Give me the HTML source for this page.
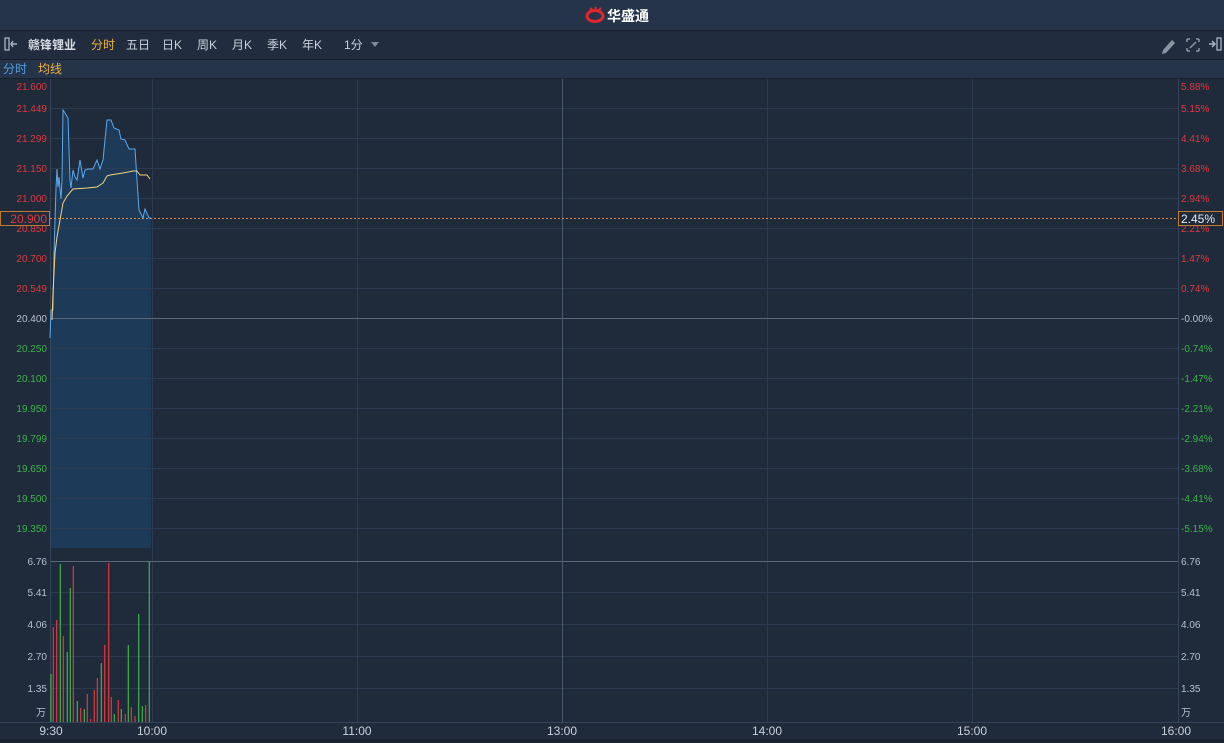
<!DOCTYPE html>
<html><head><meta charset="utf-8"><style>
html,body{margin:0;padding:0;width:1224px;height:743px;overflow:hidden;background:#1f2a3a;font-family:"Liberation Sans","Noto Sans CJK SC",sans-serif}
svg{display:block}
</style></head><body>
<svg width="1224" height="743" xmlns="http://www.w3.org/2000/svg" font-family="Liberation Sans, Noto Sans CJK SC, sans-serif">
<rect x="0" y="0" width="1224" height="743" fill="#1f2a3a"/>
<rect x="0" y="0" width="1224" height="30" fill="#253449"/>
<rect x="0" y="30" width="1224" height="1" fill="#17202c"/>
<rect x="0" y="31" width="1224" height="28" fill="#212d3e"/>
<rect x="0" y="59" width="1224" height="1" fill="#17202c"/>
<rect x="0" y="60" width="1224" height="18" fill="#253449"/>
<rect x="0" y="78" width="1224" height="1" fill="#17202c"/>
<rect x="0" y="739" width="1224" height="4" fill="#1a2330"/>
<!-- logo -->
<g transform="translate(586,8)">
<ellipse cx="9" cy="8" rx="8" ry="5.5" fill="none" stroke="#e0262e" stroke-width="3"/>
<path d="M4 2 L6 0 M9 1 L10 -1 M13 2 L15 0" stroke="#e0262e" stroke-width="2"/>
</g>
<text x="607" y="21" fill="#ffffff" font-size="14" font-weight="bold">华盛通</text>
<!-- toolbar -->
<rect x="5" y="38" width="4" height="12" fill="none" stroke="#aab4c2" stroke-width="1.3"/>
<path d="M11 44 H17 M13 41 L11 44 L13 47" stroke="#aab4c2" stroke-width="1.5" fill="none"/>
<text x="28" y="49" fill="#d6dbe3" font-size="12" font-weight="bold">赣锋锂业</text>
<text x="91" y="49" fill="#f0b23c" font-size="12">分时</text>
<text x="126" y="49" fill="#c9d1dc" font-size="12">五日</text>
<text x="162" y="49" fill="#c9d1dc" font-size="12">日K</text>
<text x="197" y="49" fill="#c9d1dc" font-size="12">周K</text>
<text x="232" y="49" fill="#c9d1dc" font-size="12">月K</text>
<text x="267" y="49" fill="#c9d1dc" font-size="12">季K</text>
<text x="302" y="49" fill="#c9d1dc" font-size="12">年K</text>
<text x="344" y="49" fill="#c9d1dc" font-size="12">1分</text>
<path d="M371 42 L379 42 L375 47 Z" fill="#7f8a99"/>
<path d="M1163 50 L1172 40 L1175 43 L1166 53 L1162 54 Z" fill="#8a94a3"/>
<path d="M1187 39 h3 M1187 39 v3 M1199 39 h-3 M1199 39 v3 M1187 51 h3 M1187 51 v-3 M1199 51 h-3 M1199 51 v-3 M1190 48 L1196 42" stroke="#8a94a3" stroke-width="1.5" fill="none"/>
<path d="M1209 44 H1214 M1212 41 L1215 44 L1212 47" stroke="#aab4c2" stroke-width="1.5" fill="none"/>
<rect x="1217" y="38" width="4" height="12" fill="none" stroke="#aab4c2" stroke-width="1.3"/>
<text x="3" y="73" fill="#4f9ee6" font-size="12">分时</text>
<text x="38" y="73" fill="#f0b23c" font-size="12">均线</text>
<!-- area -->
<path d="M50 338 L51 310 L53 310 L54 253 L56 188 L57 169 L58 187 L59 177 L61 199 L62 180 L63 110 L65 113 L68 118 L70 180 L71 188 L73 170 L75 177 L77 180 L80 160 L83 178 L85 170 L88 169 L93 169 L97 160 L100 169 L103 160 L107 120 L111 120 L114 128 L119 130 L121 139 L125 140 L129 149 L135 149 L137 180 L139 210 L143 218 L145 209 L149 218 L151 218 L151 548 L50 548 Z" fill="#1d3a58"/>
<!-- grid -->
<g stroke="#2c3b50" stroke-width="1">
<path d="M50 108.5H1178 M50 138.5H1178 M50 168.5H1178 M50 198.5H1178 M50 228.5H1178 M50 258.5H1178 M50 288.5H1178 M50 348.5H1178 M50 378.5H1178 M50 408.5H1178 M50 438.5H1178 M50 468.5H1178 M50 498.5H1178 M50 528.5H1178"/>
<path d="M50 592.5H1178 M50 624.5H1178 M50 656.5H1178 M50 688.5H1178"/>
<path d="M152.5 79V722 M357.5 79V722 M767.5 79V722 M972.5 79V722"/>
</g>
<path d="M50 318.5H1178" stroke="#5b6676"/>
<path d="M50 561.5H1178" stroke="#5b6676"/>
<path d="M562.5 79V722" stroke="#4b5a6e"/>
<path d="M50.5 79V722 M1178.5 79V722" stroke="#34445a"/>
<path d="M0 722.5H1224" stroke="#34445a"/>
<path d="M50 338 L51 310 L53 310 L54 253 L56 188 L57 169 L58 187 L59 177 L61 199 L62 180 L63 110 L65 113 L68 118 L70 180 L71 188 L73 170 L75 177 L77 180 L80 160 L83 178 L85 170 L88 169 L93 169 L97 160 L100 169 L103 160 L107 120 L111 120 L114 128 L119 130 L121 139 L125 140 L129 149 L135 149 L137 180 L139 210 L143 218 L145 209 L149 218 L151 218" fill="none" stroke="#5aaaf0" stroke-width="1"/>
<path d="M52 320 L53 293 L55 253 L57 237 L60 220 L63 203 L67 196 L73 189 L87 188 L97 187 L103 183 L107 176 L110 175 L123 173 L133 171 L137 171 L140 175 L147 175 L150 179" fill="none" stroke="#f3d27a" stroke-width="1"/>
<!-- left labels -->
<g font-size="10" text-anchor="end">
<g fill="#e0393e">
<text x="47" y="90">21.600</text><text x="47" y="112">21.449</text><text x="47" y="142">21.299</text><text x="47" y="172">21.150</text><text x="47" y="202">21.000</text><text x="47" y="232">20.850</text><text x="47" y="262">20.700</text><text x="47" y="292">20.549</text>
</g>
<text x="47" y="322" fill="#b8c0cc">20.400</text>
<g fill="#3cb44a">
<text x="47" y="352">20.250</text><text x="47" y="382">20.100</text><text x="47" y="412">19.950</text><text x="47" y="442">19.799</text><text x="47" y="472">19.650</text><text x="47" y="502">19.500</text><text x="47" y="532">19.350</text>
</g>
<g fill="#b8c0cc"><text x="47" y="565">6.76</text><text x="47" y="596">5.41</text><text x="47" y="628">4.06</text><text x="47" y="660">2.70</text><text x="47" y="692">1.35</text><text x="46" y="716">万</text></g>
</g>
<!-- right labels -->
<g font-size="10">
<g fill="#e0393e">
<text x="1181" y="90">5.88%</text><text x="1181" y="112">5.15%</text><text x="1181" y="142">4.41%</text><text x="1181" y="172">3.68%</text><text x="1181" y="202">2.94%</text><text x="1181" y="232">2.21%</text><text x="1181" y="262">1.47%</text><text x="1181" y="292">0.74%</text>
</g>
<text x="1181" y="322" fill="#b8c0cc">-0.00%</text>
<g fill="#3cb44a">
<text x="1181" y="352">-0.74%</text><text x="1181" y="382">-1.47%</text><text x="1181" y="412">-2.21%</text><text x="1181" y="442">-2.94%</text><text x="1181" y="472">-3.68%</text><text x="1181" y="502">-4.41%</text><text x="1181" y="532">-5.15%</text>
</g>
<g fill="#b8c0cc"><text x="1181" y="565">6.76</text><text x="1181" y="596">5.41</text><text x="1181" y="628">4.06</text><text x="1181" y="660">2.70</text><text x="1181" y="692">1.35</text><text x="1181" y="716">万</text></g>
</g>
<!-- current price line -->
<path d="M50 218.5H1178" stroke="#e08a3c" stroke-dasharray="2,2"/>
<rect x="0.5" y="211.5" width="49" height="14" fill="#1f2a3a" stroke="#c07a30"/>
<text x="47" y="223" text-anchor="end" fill="#e0393e" font-size="12">20.900</text>
<rect x="1178.5" y="211.5" width="44" height="14" fill="#1f2a3a" stroke="#c07a30"/>
<text x="1181" y="223" fill="#e6ebf2" font-size="12">2.45%</text>
<!-- volume -->
<g stroke-width="1.2">
<path stroke="#3cb44a" d="M51 722V674 M60.3 722V564 M67.3 722V652 M70.3 722V588 M77.3 722V701 M84.3 722V709 M101.3 722V663 M114.3 722V714 M121.3 722V709 M128.3 722V645 M138.7 722V614 M142.3 722V706 M149.3 722V561"/>
<path stroke="#e0393e" d="M53.3 722V627 M56.7 722V620 M63.3 722V636 M73.3 722V566 M80.7 722V708 M87.3 722V694 M90.7 722V719 M94.3 722V690 M97.3 722V678 M104.7 722V645 M108.7 722V563 M111.3 722V697 M118.3 722V700 M125.3 722V714 M131.3 722V707 M135 722V716 M145.7 722V705"/>
</g>
<!-- time labels -->
<g font-size="12" fill="#c9d1dc" text-anchor="middle">
<text x="51" y="735">9:30</text><text x="152" y="735">10:00</text><text x="357" y="735">11:00</text><text x="562" y="735">13:00</text><text x="767" y="735">14:00</text><text x="972" y="735">15:00</text><text x="1176" y="735">16:00</text>
</g>
</svg>
</body></html>
